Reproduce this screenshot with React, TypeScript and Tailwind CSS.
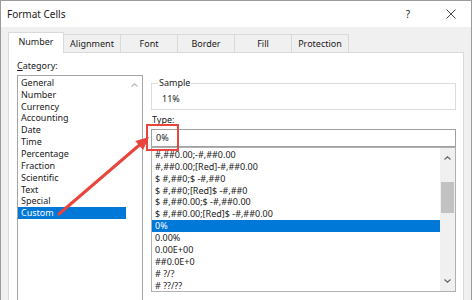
import React from "react";

const cats = ["General","Number","Currency","Accounting","Date","Time","Percentage","Fraction","Scientific","Text","Special","Custom"];
const fmts = ["#,##0.00;-#,##0.00","#,##0.00;[Red]-#,##0.00","$ #,##0;$ -#,##0","$ #,##0;[Red]$ -#,##0","$ #,##0.00;$ -#,##0.00","$ #,##0.00;[Red]$ -#,##0.00","0%","0.00%","0.00E+00","##0.0E+0","# ?/?","# ??/??"];
const tabs = ["Alignment","Font","Border","Fill","Protection"];

function Chevron({ up, color }: { up: boolean; color: string }) {
  return (
    <svg width="7" height="4" viewBox="0 0 7 4">
      <polyline points={up ? "0.5,3.5 3.5,0.8 6.5,3.5" : "0.5,0.5 3.5,3.2 6.5,0.5"} fill="none" stroke={color} strokeWidth="1.1" />
    </svg>
  );
}

export default function App() {
  return (
    <div className="relative w-[472px] h-[300px] overflow-hidden bg-[#f0f0f0] border-l border-t border-r border-[#9b9b9b] flex flex-col font-['Noto_Sans',sans-serif] text-[9px] leading-[12px] text-[#1a1a1a]">
      <div className="h-[26px] shrink-0 bg-white flex items-center pl-[6px]">
        <span className="text-[10px]">Format Cells</span>
        <span className="ml-auto mr-[36px] text-[10px]">?</span>
        <svg width="10" height="10" viewBox="0 0 10 10" className="mr-[15px]">
          <path d="M0.5 0.5 L9.5 9.5 M9.5 0.5 L0.5 9.5" stroke="#333" strokeWidth="0.9" />
        </svg>
      </div>
      <div className="flex items-end ml-[7px] mt-[5px] h-[20px] shrink-0">
        <div className="relative z-10 mb-[-1px] h-[21px] w-[56px] bg-white border border-b-0 border-[#d9d9d9] flex items-center justify-center pb-[2px]">Number</div>
        {tabs.map((t) => (
          <div key={t} className="h-[18px] w-[57px] bg-[#f0f0f0] border border-l-0 border-b-0 border-[#d9d9d9] flex items-center justify-center">{t}</div>
        ))}
      </div>
      <div className="ml-[7px] w-[456px] flex-1 bg-white border border-[#d9d9d9] flex pl-[8px] pt-[7px]">
        <div className="w-[126px] flex flex-col">
          <div className="h-[12px]"><span className="underline">C</span>ategory:</div>
          <div className="mt-[3px] h-[240px] border border-[#a6a6a6] flex">
            <div className="w-[108px] pt-[1px]">
              {cats.map((c) => (
                <div key={c} className={`h-[11.85px] flex items-center pl-[3px] ${c === "Custom" ? "bg-[#0078d7] text-white" : ""}`}>{c}</div>
              ))}
            </div>
            <div className="flex-1 flex justify-center pt-[7px]">
              <Chevron up color="#b8b8b8" />
            </div>
          </div>
        </div>
        <div className="ml-[8px] w-[305px] flex flex-col">
          <fieldset className="mt-[17px] border border-[#dcdcdc] pl-[10px]">
            <legend className="ml-[-4px] px-[1px]">Sample</legend>
            <div className="h-[20px] flex items-center">11%</div>
          </fieldset>
          <div className="mt-[4px] h-[12px] pl-[1px]"><span className="underline">T</span>ype:</div>
          <div className="mt-[3px] h-[18px] border border-[#a0a0a0] flex items-center pl-[4px]">0%</div>
          <div className="h-[145px] border border-[#b0b0b0] flex">
            <div className="flex-1 pt-[1px]">
              {fmts.map((f) => (
                <div key={f} className={`h-[11.88px] flex items-center pl-[3px] ${f === "0%" ? "bg-[#0078d7] text-white" : ""}`}>{f}</div>
              ))}
            </div>
            <div className="w-[15px] bg-[#f0f0f0] flex flex-col items-center">
              <div className="h-[20px] flex items-center justify-center"><Chevron up color="#606060" /></div>
              <div className="mt-[14px] h-[31px] w-[13px] bg-[#c2c2c2]" />
              <div className="mt-auto h-[20px] flex items-center justify-center"><Chevron up={false} color="#606060" /></div>
            </div>
          </div>
        </div>
      </div>
      <div className="absolute left-[145px] top-[123px] w-[33px] h-[27px] border-2 border-[#e8453c]" />
      <svg className="absolute left-0 top-0" width="472" height="300" viewBox="0 0 472 300">
        <line x1="58" y1="213" x2="139" y2="143.5" stroke="#e8453c" strokeWidth="3" strokeLinecap="round" />
        <polygon points="148,136 134.3,140 142.1,149" fill="#e8453c" />
      </svg>
    </div>
  );
}
